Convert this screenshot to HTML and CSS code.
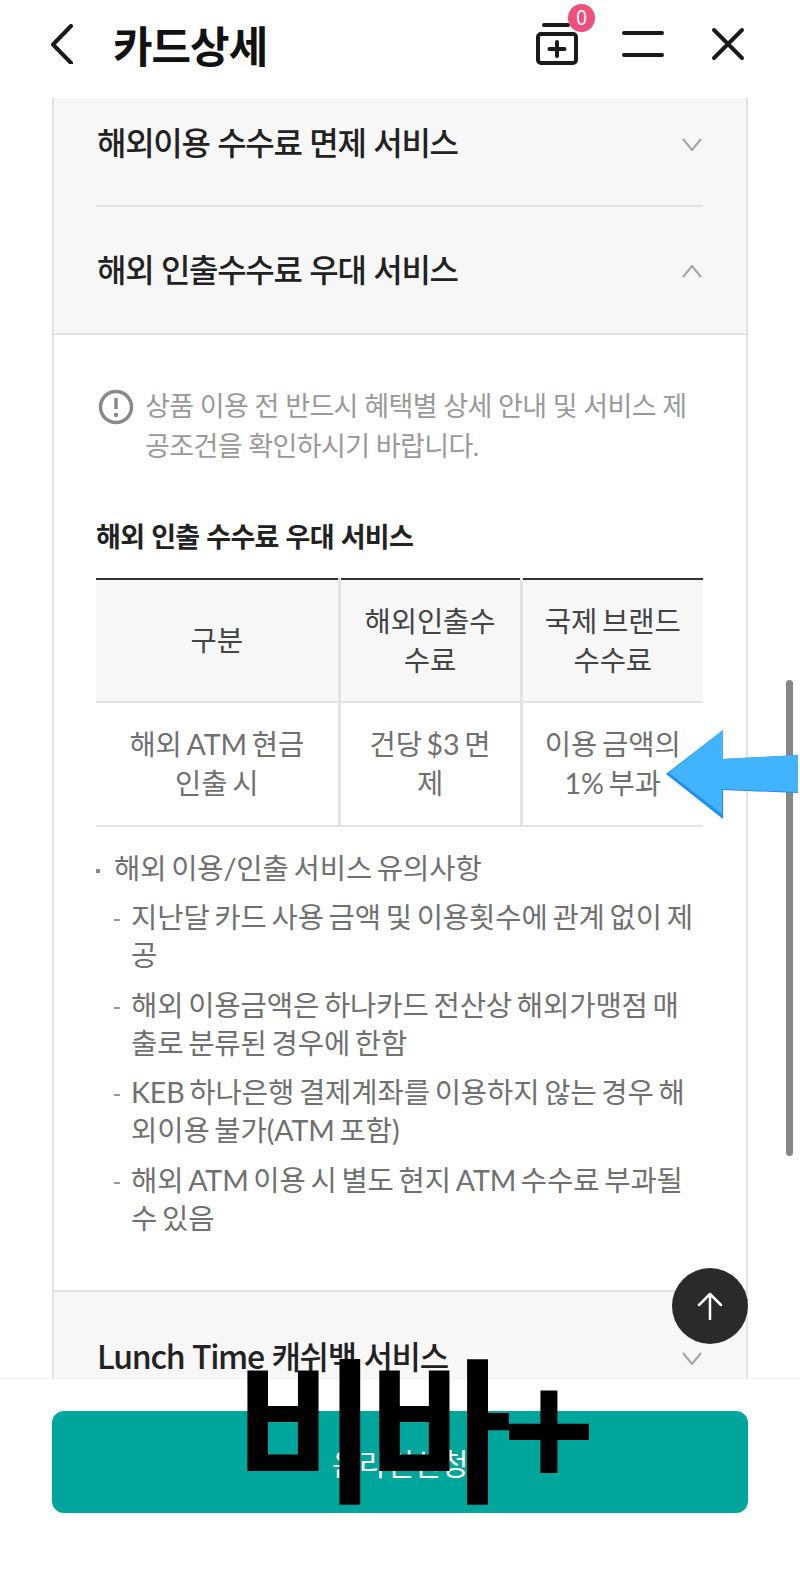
FILE: index.html
```html
<!DOCTYPE html>
<html lang="ko">

<head>
    <meta charset="UTF-8">
    <meta name="viewport" content="width=device-width, initial-scale=1.0">
    <title>카드상세</title>
    <link rel="stylesheet" href="styles.css">
</head>

<body>
    <div class="page">
        <header class="top-bar">
            <svg class="back-icon" width="28" height="40" viewBox="0 0 28 40">
                <path d="M23 2 L5 20.5 L23 39" />
            </svg>
            <h1>카드상세</h1>
            <div class="top-icons">
                <div class="cart">
                    <svg width="48" height="62" viewBox="0 0 48 62">
                        <path d="M11 12 H35" />
                        <rect x="5" y="21" width="38" height="29" rx="3" />
                        <path d="M24 29 V43 M16.500 36 H31.500" />
                    </svg>
                    <span class="badge">0</span>
                </div>
                <svg class="menu-icon" width="42" height="30" viewBox="0 0 42 30">
                    <path d="M2 4 H40 M2 26 H40" />
                </svg>
                <svg class="close-icon" width="36" height="36" viewBox="0 0 36 36">
                    <path d="M4 4 L32 32 M32 4 L4 32" />
                </svg>
            </div>
        </header>

        <div class="card">
            <div class="acc-head first">
                <span>해외이용 수수료 면제 서비스</span>
                <svg class="chevron" width="20" height="13" viewBox="0 0 20 13"><path d="M1 1 L10 12 L19 1" /></svg>
            </div>
            <div class="acc-head second">
                <span>해외 인출수수료 우대 서비스</span>
                <svg class="chevron" width="20" height="13" viewBox="0 0 20 13"><path d="M1 12 L10 1 L19 12" /></svg>
            </div>

            <div class="detail">
                <div class="notice">
                    <svg width="36" height="36" viewBox="0 0 36 36">
                        <circle cx="18" cy="18" r="15.500" />
                        <path d="M18 9 V20" />
                        <circle class="dot" cx="18" cy="26" r="2.200" />
                    </svg>
                    <p>상품 이용 전 반드시 혜택별 상세 안내 및 서비스 제공조건을 확인하시기 바랍니다.</p>
                </div>

                <h3>해외 인출 수수료 우대 서비스</h3>

                <table>
                    <tr>
                        <th class="col-a">구분</th>
                        <th class="col-b">해외인출수<br>수료</th>
                        <th class="col-c">국제 브랜드<br>수수료</th>
                    </tr>
                    <tr>
                        <td>해외 ATM 현금<br>인출 시</td>
                        <td>건당 $3 면<br>제</td>
                        <td>이용 금액의<br>1% 부과</td>
                    </tr>
                </table>

                <p class="note-title">해외 이용/인출 서비스 유의사항</p>
                <ul class="notes">
                    <li>지난달 카드 사용 금액 및 이용횟수에 관계 없이 제공</li>
                    <li>해외 이용금액은 하나카드 전산상 해외가맹점 매출로 분류된 경우에 한함</li>
                    <li>KEB 하나은행 결제계좌를 이용하지 않는 경우 해외이용 불가(ATM 포함)</li>
                    <li>해외 ATM 이용 시 별도 현지 ATM 수수료 부과될 수 있음</li>
                </ul>
            </div>

            <div class="acc-head third">
                <span>Lunch Time 캐쉬백 서비스</span>
                <svg class="chevron" width="20" height="13" viewBox="0 0 20 13"><path d="M1 1 L10 12 L19 1" /></svg>
            </div>
        </div>

        <div class="scrollbar"></div>

        <svg class="blue-arrow" width="136" height="92" viewBox="0 0 136 92">
            <path class="arrow-edge" d="M1 45 L58 1 V30 L133 26 V64 L58 61 V90 Z" />
            <path class="arrow-fill" d="M4 44 L58 1 V30 L133 26 V63 L57 60 V85 Z" />
        </svg>

        <button class="to-top">
            <svg width="26" height="28" viewBox="0 0 26 28"><path d="M13 27 V2 M2 13 L13 2 L24 13" /></svg>
        </button>

        <footer class="bottom-bar">
            <button class="apply">온라인신청</button>
        </footer>

        <div class="watermark">비바+</div>
    </div>
</body>

</html>
```

FILE: styles.css
```css
* {
    box-sizing: border-box;
}

body {
    margin: 0;
    background: #fff;
    font-family: "Noto Sans CJK KR", "Noto Sans", sans-serif;
    color: #707070;
}

.page {
    position: relative;
    width: 800px;
    height: 1570px;
    overflow: hidden;
}

.top-bar {
    display: flex;
    align-items: center;
    height: 98px;
    padding: 0 54px 10px 48px;
}

.top-bar svg path,
.top-bar svg rect {
    fill: none;
    stroke: #1a1a1a;
    stroke-width: 4;
    stroke-linecap: round;
    stroke-linejoin: round;
}

h1 {
    margin: 0 0 0 37px;
    font-size: 43px;
    font-weight: 700;
    letter-spacing: -1px;
    color: #111;
}

.top-icons {
    display: flex;
    align-items: center;
    margin-left: auto;
}

.cart {
    position: relative;
    width: 48px;
    height: 62px;
    margin-right: 41px;
}

.cart svg {
    display: block;
}

.badge {
    position: absolute;
    top: -9px;
    left: 35px;
    width: 27px;
    height: 28px;
    border-radius: 50%;
    background: #ee4f7d;
    color: #fff;
    font-size: 20px;
    line-height: 26px;
    text-align: center;
}

.close-icon {
    margin-left: 46px;
}

.card {
    margin: 0 52px;
    height: 1300px;
    border-left: 2px solid #e2e2e2;
    border-right: 2px solid #e2e2e2;
}

.acc-head {
    display: flex;
    align-items: center;
    justify-content: space-between;
    padding: 0 44px 0 43px;
    background: #f7f7f7;
    font-size: 32px;
    font-weight: 500;
    letter-spacing: -1.3px;
    color: #222;
}

.acc-head.first {
    height: 109px;
    padding-bottom: 24px;
    background-image: linear-gradient(#e2e2e2, #e2e2e2);
    background-size: 607px 2px;
    background-position: 42px 100%;
    background-repeat: no-repeat;
}

.acc-head.second {
    height: 128px;
    padding-bottom: 5px;
    border-bottom: 2px solid #e2e2e2;
}

.acc-head.third {
    height: 128px;
    border-top: 2px solid #e2e2e2;
}

.chevron {
    margin-top: 7px;
}

.chevron path {
    fill: none;
    stroke: #a8a8a8;
    stroke-width: 2.200;
}

.detail {
    height: 955px;
    padding: 51px 42px 0;
    background: #fff;
    font-family: Lato, "Noto Sans CJK KR", sans-serif;
}

.notice {
    display: flex;
    align-items: flex-start;
    color: #999;
}

.notice svg {
    flex: none;
    margin: 3px 11px 0 2px;
}

.notice svg circle,
.notice svg path {
    fill: none;
    stroke: #888;
    stroke-width: 3.500;
}

.notice svg .dot {
    fill: #888;
    stroke: none;
}

.notice p {
    margin: 0;
    font-size: 27px;
    line-height: 40px;
    letter-spacing: -0.600px;
}

h3 {
    margin: 50px 0 22px;
    font-family: "Noto Sans CJK KR", sans-serif;
    font-size: 27px;
    font-weight: 700;
    line-height: 40px;
    letter-spacing: -0.700px;
    color: #222;
}

table {
    width: 607px;
    border-collapse: collapse;
    border-top: 2px solid #333;
    table-layout: fixed;
}

th,
td {
    padding: 0 4px;
    font-size: 28.600px;
    font-weight: 400;
    line-height: 39px;
    letter-spacing: -0.100px;
    word-spacing: -2.500px;
    text-align: center;
    border-bottom: 2px solid #e2e2e2;
}

th {
    height: 123px;
    background: #f7f7f7;
    color: #444;
}

td {
    height: 124px;
}

th + th,
td + td {
    border-left: 3px solid #e2e2e2;
}

.col-a {
    width: 243px;
}

.col-b {
    width: 182px;
}

.note-title {
    position: relative;
    margin: 22px 0 0;
    padding-left: 18px;
    font-size: 28.600px;
    line-height: 38px;
    letter-spacing: -0.100px;
    word-spacing: -2.500px;
}

.note-title::before {
    content: "";
    position: absolute;
    left: 0;
    top: 20px;
    width: 4px;
    height: 4px;
    background: #888;
}

.notes {
    margin: 11px 0 0;
    padding: 0;
    list-style: none;
}

.notes li {
    position: relative;
    margin-bottom: 11.500px;
    padding-left: 35px;
    font-size: 28.600px;
    line-height: 38px;
    letter-spacing: -0.100px;
    word-spacing: -2.500px;
}

.notes li::before {
    content: "";
    position: absolute;
    left: 18px;
    top: 21px;
    width: 6px;
    height: 2px;
    background: #999;
}

.scrollbar {
    position: absolute;
    top: 680px;
    left: 786px;
    width: 7px;
    height: 476px;
    border-radius: 4px;
    background: #868686;
}

.blue-arrow {
    position: absolute;
    top: 729px;
    left: 665px;
}

.arrow-edge {
    fill: #1f8ef0;
}

.arrow-fill {
    fill: #42b4ff;
}

.to-top {
    position: absolute;
    top: 1268px;
    left: 672px;
    display: flex;
    align-items: center;
    justify-content: center;
    width: 76px;
    height: 76px;
    padding: 0;
    border: none;
    border-radius: 50%;
    background: #2a2a2a;
}

.to-top path {
    fill: none;
    stroke: #fff;
    stroke-width: 2.500;
    stroke-linecap: round;
    stroke-linejoin: round;
}

.bottom-bar {
    position: absolute;
    left: 0;
    right: 0;
    bottom: 0;
    height: 192px;
    padding: 32px 52px 0;
    background: #fff;
    border-top: 1px solid #f0f0f0;
}

.apply {
    display: block;
    width: 696px;
    height: 102px;
    padding: 0;
    border: none;
    border-radius: 12px;
    background: #00a59b;
    color: #fff;
    font-family: inherit;
    font-size: 30px;
    letter-spacing: -0.500px;
}

.watermark {
    position: absolute;
    top: 1307px;
    left: 234px;
    font-size: 156px;
    font-weight: 700;
    line-height: 230px;
    letter-spacing: -9px;
    color: #000;
}
```
